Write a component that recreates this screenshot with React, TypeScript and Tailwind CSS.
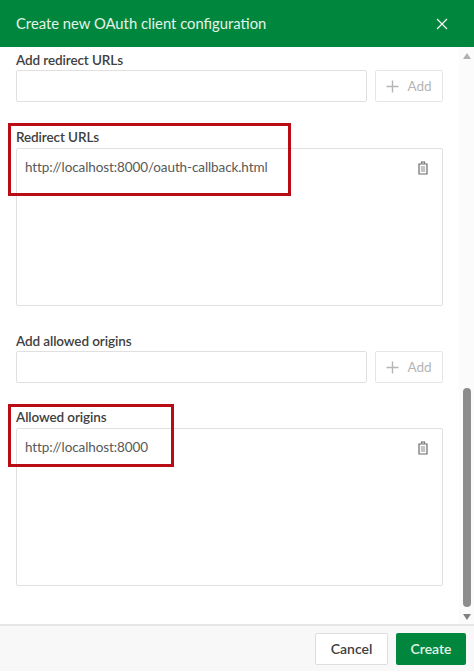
import React from "react";

const font = { fontFamily: '"Lato", "Open Sans", sans-serif' };

function Trash() {
  return (
    <svg width="10" height="14" viewBox="0 0 10 14" fill="none" stroke="#6b6b6b" strokeWidth="1.2" className="shrink-0">
      <path d="M1 3h8v10H1z" fill="#fff" />
      <path d="M3.5 2.6V1h3v1.6" />
      <path d="M2.8 6h4.4M2.8 8h4.4M2.8 10h4.4" stroke="#8a8a8a" />
    </svg>
  );
}

function Plus() {
  return (
    <svg width="13" height="13" viewBox="0 0 13 13" stroke="#b5b5b5" strokeWidth="1.4">
      <path d="M6.5 0.5v12M0.5 6.5h12" />
    </svg>
  );
}

function AddRow({ label }: { label: string }) {
  return (
    <section className="flex flex-col">
      <div className="h-[20px] text-[13.5px] tracking-[-0.1px] leading-[20px] font-semibold text-[#404040]">{label}</div>
      <div className="flex gap-2">
        <div className="h-[32px] w-[351px] rounded-[2px] border border-[#e0e0e0] bg-white" />
        <div className="h-[32px] w-[68px] rounded-[2px] border border-[#e6e6e6] bg-white flex items-center justify-center gap-[8px] text-[13.5px] text-[#b5b5b5]">
          <Plus />
          <span>Add</span>
        </div>
      </div>
    </section>
  );
}

function ListBox({ label, value }: { label: string; value: string }) {
  return (
    <section className="flex flex-col">
      <div className="h-[20px] text-[13.5px] tracking-[-0.1px] leading-[22px] font-semibold text-[#404040]">{label}</div>
      <div className="mt-[2px] h-[158px] w-[427px] rounded-[2px] border border-[#e0e0e0] bg-white pl-[8px] pr-[14px] pt-[8px] flex justify-between items-start">
        <span className="text-[13.5px] tracking-[-0.1px] leading-[20px] text-[#595959]">{value}</span>
        <span className="mt-[4px]"><Trash /></span>
      </div>
    </section>
  );
}

export default function App() {
  return (
    <div style={font} className="relative w-[474px] h-[672px] bg-white flex flex-col overflow-hidden">
      <header className="h-[47px] shrink-0 bg-[#00873d] flex items-center justify-between pl-[16px] pr-[26px] text-white">
        <span className="text-[14.8px] text-[#e4f3ea]">Create new OAuth client configuration</span>
        <svg width="12" height="12" viewBox="0 0 12 12" stroke="#fff" strokeWidth="1.2">
          <path d="M1 1l10 10M11 1L1 11" />
        </svg>
      </header>
      <main className="relative flex-1 min-h-0 pl-[16px] pt-[3px] flex flex-col">
        <AddRow label="Add redirect URLs" />
        <div className="mt-[24px]"><ListBox label="Redirect URLs" value="http://localhost:8000/oauth-callback.html" /></div>
        <div className="mt-[25px]"><AddRow label="Add allowed origins" /></div>
        <div className="mt-[23px]"><ListBox label="Allowed origins" value="http://localhost:8000" /></div>
        <div className="absolute right-0 top-0 bottom-0 w-[15px] bg-[#fbfbfb]">
          <div className="absolute left-[4px] top-[6px] w-0 h-0 border-x-[4px] border-x-transparent border-b-[6px] border-b-[#b0b0b0]" />
          <div className="absolute left-[4px] top-[341px] w-[8px] h-[219px] rounded-full bg-[#8c8c8c]" />
          <div className="absolute left-[4px] top-[567px] w-0 h-0 border-x-[4px] border-x-transparent border-t-[6px] border-t-[#808080]" />
        </div>
      </main>
      <footer className="h-[47px] shrink-0 mb-[1px] border-t-2 border-[#e6e6e6] bg-[#f8f8f8] flex items-center justify-end gap-2 pr-[8px] text-[14px]">
        <button className="h-[32px] w-[73px] rounded-[2px] border border-[#dedede] bg-white font-semibold text-[#404040]">Cancel</button>
        <button className="h-[32px] w-[70px] rounded-[2px] bg-[#00873d] font-semibold text-[#e4f3ea]">Create</button>
      </footer>
      <div className="absolute left-[8px] top-[123px] w-[283px] h-[73px] border-[3px] border-[#b90c14]" />
      <div className="absolute left-[8px] top-[404px] w-[166px] h-[63px] border-[3px] border-[#b90c14]" />
    </div>
  );
}
